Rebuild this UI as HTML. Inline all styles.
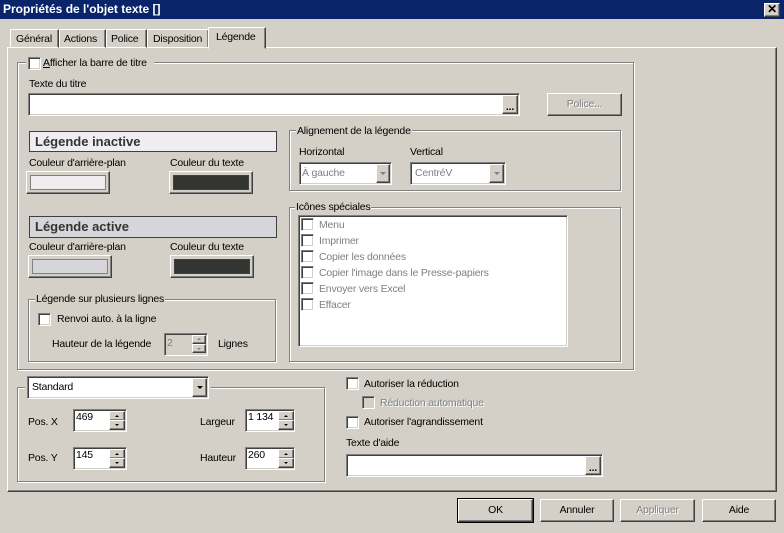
<!DOCTYPE html>
<html><head><meta charset="utf-8"><style>
*{box-sizing:border-box;margin:0;padding:0}
body{width:784px;height:533px;background:#d4d0c8;font:10.5px/13px "Liberation Sans",sans-serif;letter-spacing:-0.2px;color:#000;position:relative;overflow:hidden}
.a{position:absolute;white-space:nowrap}
.t{position:absolute;white-space:nowrap;line-height:13px}
.sunk{position:absolute;background:#fff;border:1px solid;border-color:#808080 #fff #fff #808080;box-shadow:inset 1px 1px #404040,inset -1px -1px #d4d0c8}
.rais{position:absolute;background:#d4d0c8;border:1px solid;border-color:#fff #404040 #404040 #fff;box-shadow:inset -1px -1px #808080}
.grp{position:absolute;border:1px solid #808080;box-shadow:1px 1px #fff,inset 1px 1px #fff}
.lg{position:absolute;background:#d4d0c8;padding:0 1px;line-height:13px;white-space:nowrap}
.cb{position:absolute;width:13px;height:13px;background:#fff;border:1px solid;border-color:#808080 #fff #fff #808080;box-shadow:inset 1px 1px #404040,inset -1px -1px #d4d0c8}
.cbd{position:absolute;width:13px;height:13px;background:#d4d0c8;border:1px solid;border-color:#808080 #fff #fff #808080;box-shadow:inset 1px 1px #404040,inset -1px -1px #d4d0c8}
.dis{color:#808080;text-shadow:1px 1px #fff}
.g{color:#808080}
.arr{position:absolute;width:0;height:0;border-left:3px solid transparent;border-right:3px solid transparent;border-top:3px solid #000}
.up{position:absolute;width:0;height:0;border-left:2px solid transparent;border-right:2px solid transparent;border-bottom:2px solid #000}
.dn{position:absolute;width:0;height:0;border-left:2px solid transparent;border-right:2px solid transparent;border-top:2px solid #000}
.btn{text-align:center;line-height:20px}
</style></head><body>
<div class="a" style="left:0;top:0;width:784px;height:19px;background:#0a246a"></div>
<div class="a" style="left:3px;top:3px;color:#fff;font-weight:bold;font-size:12px;line-height:13px;letter-spacing:0">Propriétés de l'objet texte []</div>
<div class="rais" style="left:764px;top:3px;width:16px;height:14px;font:bold 12px/11px 'Liberation Sans',sans-serif;text-align:center">✕</div>

<div class="a" style="left:7px;top:47px;width:770px;height:445px;border:1px solid;border-color:#fff #404040 #404040 #fff;box-shadow:inset -1px -1px #808080"></div>
<div class="a" style="left:10px;top:29px;width:49px;height:19px;border:1px solid;border-color:#fff #404040 transparent #fff;box-shadow:inset -1px 0 #808080;padding:3px 0 0 5px">Général</div>
<div class="a" style="left:59px;top:29px;width:47px;height:19px;border:1px solid;border-color:#fff #404040 transparent #fff;box-shadow:inset -1px 0 #808080;padding:3px 0 0 4px">Actions</div>
<div class="a" style="left:106px;top:29px;width:41px;height:19px;border:1px solid;border-color:#fff #404040 transparent #fff;box-shadow:inset -1px 0 #808080;padding:3px 0 0 4px">Police</div>
<div class="a" style="left:147px;top:29px;width:62px;height:19px;border:1px solid;border-color:#fff #404040 transparent #fff;box-shadow:inset -1px 0 #808080;padding:3px 0 0 5px">Disposition</div>
<div class="a" style="left:208px;top:27px;width:58px;height:22px;background:#d4d0c8;border:1px solid;border-color:#fff #404040 transparent #fff;box-shadow:inset -1px 0 #808080;padding:3px 0 0 7px">Légende</div>

<div class="grp" style="left:17px;top:62px;width:617px;height:308px"></div>
<div class="lg" style="left:26px;top:56px;width:128px;height:14px"></div>
<div class="cb" style="left:28px;top:57px"></div>
<div class="t" style="left:43px;top:57px"><u>A</u>fficher la barre de titre</div>
<div class="t" style="left:29px;top:78px">Texte du titre</div>
<div class="sunk" style="left:28px;top:93px;width:492px;height:23px"></div>
<div class="rais" style="left:502px;top:95px;width:16px;height:19px;font-weight:bold;line-height:22px;text-align:center">...</div>
<div class="rais btn dis" style="left:547px;top:93px;width:75px;height:23px">Police...</div>

<div class="a" style="left:29px;top:131px;width:248px;height:21px;background:#efedef;border:1px solid #404040;font-weight:bold;font-size:13px;line-height:19px;padding-left:5px;color:#333;letter-spacing:0">Légende inactive</div>
<div class="t" style="left:29px;top:157px">Couleur d'arrière-plan</div>
<div class="t" style="left:170px;top:157px">Couleur du texte</div>
<div class="rais" style="left:26px;top:171px;width:84px;height:23px;padding:3px"><div style="width:100%;height:100%;background:#efedef;border:1px solid #808080"></div></div>
<div class="rais" style="left:169px;top:171px;width:84px;height:23px;padding:3px"><div style="width:100%;height:100%;background:#333533;border:1px solid #404040"></div></div>

<div class="a" style="left:29px;top:216px;width:248px;height:22px;background:#d6d5da;border:1px solid #404040;font-weight:bold;font-size:13px;line-height:20px;padding-left:5px;color:#333;letter-spacing:0">Légende active</div>
<div class="t" style="left:29px;top:241px">Couleur d'arrière-plan</div>
<div class="t" style="left:170px;top:241px">Couleur du texte</div>
<div class="rais" style="left:28px;top:255px;width:84px;height:23px;padding:3px"><div style="width:100%;height:100%;background:#d6d5da;border:1px solid #808080"></div></div>
<div class="rais" style="left:170px;top:255px;width:84px;height:23px;padding:3px"><div style="width:100%;height:100%;background:#333533;border:1px solid #404040"></div></div>

<div class="grp" style="left:28px;top:299px;width:248px;height:63px"></div>
<div class="lg" style="left:35px;top:293px">Légende sur plusieurs lignes</div>
<div class="cb" style="left:38px;top:313px"></div>
<div class="t" style="left:57px;top:313px">Renvoi auto. à la ligne</div>
<div class="t" style="left:52px;top:338px">Hauteur de la légende</div>
<div class="a" style="left:164px;top:333px;width:44px;height:23px;border:1px solid;border-color:#808080 #fff #fff #808080;box-shadow:inset 1px 1px #404040"></div>
<div class="t g" style="left:167px;top:337px">2</div>
<div class="rais" style="left:192px;top:335px;width:14px;height:9px"><div class="up" style="left:4px;top:2px;border-bottom-color:#808080"></div></div>
<div class="rais" style="left:192px;top:344px;width:14px;height:9px"><div class="dn" style="left:4px;top:3px;border-top-color:#808080"></div></div>
<div class="t" style="left:218px;top:338px">Lignes</div>

<div class="grp" style="left:289px;top:130px;width:332px;height:61px"></div>
<div class="lg" style="left:296px;top:125px">Alignement de la légende</div>
<div class="t" style="left:299px;top:146px">Horizontal</div>
<div class="t" style="left:410px;top:146px">Vertical</div>
<div class="sunk" style="left:299px;top:162px;width:93px;height:23px;background:#d4d0c8"></div>
<div class="a" style="left:301px;top:164px;width:75px;height:19px;background:#fff"></div>
<div class="t g" style="left:302px;top:167px">À gauche</div>
<div class="rais" style="left:376px;top:164px;width:14px;height:19px"><div class="arr" style="left:3px;top:7px;border-top-color:#808080"></div></div>
<div class="sunk" style="left:410px;top:162px;width:96px;height:23px;background:#d4d0c8"></div>
<div class="a" style="left:412px;top:164px;width:77px;height:19px;background:#fff"></div>
<div class="t g" style="left:415px;top:167px">CentréV</div>
<div class="rais" style="left:489px;top:164px;width:15px;height:19px"><div class="arr" style="left:4px;top:7px;border-top-color:#808080"></div></div>

<div class="grp" style="left:289px;top:207px;width:332px;height:155px"></div>
<div class="lg" style="left:295px;top:201px">Icônes spéciales</div>
<div class="sunk" style="left:298px;top:215px;width:270px;height:132px"></div>
<div class="cbd" style="left:301px;top:218px;background:#fff"></div><div class="t g" style="left:319px;top:219px">Menu</div>
<div class="cbd" style="left:301px;top:234px;background:#fff"></div><div class="t g" style="left:319px;top:235px">Imprimer</div>
<div class="cbd" style="left:301px;top:250px;background:#fff"></div><div class="t g" style="left:319px;top:251px">Copier les données</div>
<div class="cbd" style="left:301px;top:266px;background:#fff"></div><div class="t g" style="left:319px;top:267px">Copier l'image dans le Presse-papiers</div>
<div class="cbd" style="left:301px;top:282px;background:#fff"></div><div class="t g" style="left:319px;top:283px">Envoyer vers Excel</div>
<div class="cbd" style="left:301px;top:298px;background:#fff"></div><div class="t g" style="left:319px;top:299px">Effacer</div>

<div class="grp" style="left:17px;top:387px;width:308px;height:95px"></div>
<div class="lg" style="left:25px;top:380px;width:186px;height:14px"></div>
<div class="sunk" style="left:27px;top:376px;width:182px;height:23px"></div>
<div class="t" style="left:32px;top:381px">Standard</div>
<div class="rais" style="left:192px;top:378px;width:15px;height:19px"><div class="arr" style="left:4px;top:7px"></div></div>

<div class="t" style="left:28px;top:416px">Pos. X</div>
<div class="sunk" style="left:73px;top:409px;width:54px;height:23px"></div><div class="t" style="left:76px;top:411px">469</div>
<div class="rais" style="left:109px;top:411px;width:16px;height:10px"><div class="up" style="left:5px;top:3px"></div></div>
<div class="rais" style="left:109px;top:420px;width:16px;height:10px"><div class="dn" style="left:5px;top:3px"></div></div>
<div class="t" style="left:28px;top:452px">Pos. Y</div>
<div class="sunk" style="left:73px;top:447px;width:54px;height:23px"></div><div class="t" style="left:76px;top:449px">145</div>
<div class="rais" style="left:109px;top:449px;width:16px;height:10px"><div class="up" style="left:5px;top:3px"></div></div>
<div class="rais" style="left:109px;top:458px;width:16px;height:10px"><div class="dn" style="left:5px;top:3px"></div></div>
<div class="t" style="left:200px;top:416px">Largeur</div>
<div class="sunk" style="left:245px;top:409px;width:50px;height:23px"></div><div class="t" style="left:248px;top:411px">1 134</div>
<div class="rais" style="left:278px;top:411px;width:16px;height:10px"><div class="up" style="left:5px;top:3px"></div></div>
<div class="rais" style="left:278px;top:420px;width:16px;height:10px"><div class="dn" style="left:5px;top:3px"></div></div>
<div class="t" style="left:200px;top:452px">Hauteur</div>
<div class="sunk" style="left:245px;top:447px;width:50px;height:23px"></div><div class="t" style="left:248px;top:449px">260</div>
<div class="rais" style="left:278px;top:449px;width:16px;height:10px"><div class="up" style="left:5px;top:3px"></div></div>
<div class="rais" style="left:278px;top:458px;width:16px;height:10px"><div class="dn" style="left:5px;top:3px"></div></div>

<div class="cb" style="left:346px;top:377px"></div><div class="t" style="left:364px;top:378px">Autoriser la réduction</div>
<div class="cbd" style="left:362px;top:396px"></div><div class="t dis" style="left:380px;top:397px">Réduction automatique</div>
<div class="cb" style="left:346px;top:416px"></div><div class="t" style="left:364px;top:416px">Autoriser l'agrandissement</div>
<div class="t" style="left:346px;top:437px">Texte d'aide</div>
<div class="sunk" style="left:346px;top:454px;width:257px;height:23px"></div>
<div class="rais" style="left:585px;top:456px;width:16px;height:19px;font-weight:bold;line-height:22px;text-align:center">...</div>

<div class="rais btn" style="left:458px;top:499px;width:75px;height:23px;outline:1px solid #000">OK</div>
<div class="rais btn" style="left:540px;top:499px;width:74px;height:23px">Annuler</div>
<div class="rais btn dis" style="left:620px;top:499px;width:75px;height:23px">Appliquer</div>
<div class="rais btn" style="left:702px;top:499px;width:74px;height:23px">Aide</div>
</body></html>
